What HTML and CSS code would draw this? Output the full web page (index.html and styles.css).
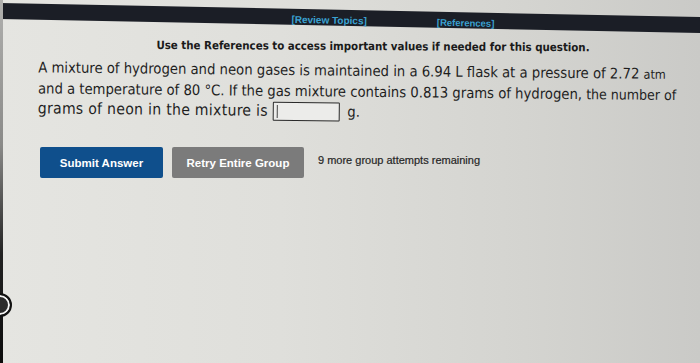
FILE: index.html
```html
<!DOCTYPE html>
<html lang="en">
<head>
<meta charset="utf-8">
<title>Question</title>
<link rel="stylesheet" href="styles.css">
</head>
<body>
<div class="screen">
  <div class="topbar">
    <a class="toplink toplink-review">[Review Topics]</a>
    <a class="toplink toplink-refs">[References]</a>
  </div>
  <p class="refnote">Use the References to access important values if needed for this question.</p>
  <p class="question">A mixture of hydrogen and neon gases is maintained in a 6.94 L flask at a pressure of 2.72 <span class="unit">atm</span> and a temperature of 80 °C. If the gas mixture contains 0.813 grams of hydrogen, <span class="tail">the number of</span> <span class="lead">grams of neon in the mixture is</span> <span class="answer"><span class="caret"></span></span> g.</p>
  <div class="actions">
    <button class="btn btn-primary">Submit Answer</button>
    <button class="btn btn-secondary">Retry Entire Group</button>
    <span class="attempts">9 more group attempts remaining</span>
  </div>
  <div class="bezel"></div>
  <div class="float-btn"></div>
</div>
</body>
</html>
```

FILE: styles.css
```css
html, body {
  margin: 0;
  padding: 0;
}
body {
  width: 700px;
  height: 363px;
  overflow: hidden;
}
.screen {
  position: relative;
  width: 700px;
  height: 363px;
  overflow: hidden;
  background: linear-gradient(90deg, #e5e5e1 0%, #dfdfdb 40%, #d4d4d0 75%, #cacac7 100%);
  display: flex;
  flex-direction: column;
  font-family: "DejaVu Sans Condensed", "DejaVu Sans", sans-serif;
  font-stretch: condensed;
  color: #1c1c1c;
}
.topbar {
  flex: none;
  width: 730px;
  margin: 10px 0 0 -15px;
  height: 16px;
  background: #1b1e26;
  transform: rotate(1.15deg);
  display: flex;
  justify-content: center;
  align-items: flex-end;
  gap: 70px;
  padding-left: 86px;
  box-sizing: border-box;
}
.toplink {
  font-family: "Liberation Sans", Arial, sans-serif;
  font-weight: bold;
  font-stretch: normal;
  color: #3aa2d2;
  font-size: 10px;
  line-height: 11px;
}
.toplink-refs {
  font-size: 9.5px;
}
.refnote {
  margin: 13px 0 0;
  padding-left: 46px;
  text-align: center;
  font-weight: bold;
  font-size: 11.4px;
  line-height: 14px;
  color: #1a1a1a;
  transform: rotate(0.3deg);
}
.question {
  margin: 4px 0 0;
  padding: 0 0 0 38px;
  width: 682px;
  box-sizing: border-box;
  font-size: 14.7px;
  line-height: 20px;
  color: #1e1e1e;
  transform: rotate(0.6deg);
  transform-origin: left center;
}
.unit {
  font-size: 12.5px;
}
.tail {
  font-size: 14px;
}
.lead {
  font-size: 15.6px;
  letter-spacing: 0.3px;
}
.answer {
  display: inline-block;
  position: relative;
  width: 65px;
  height: 17px;
  border: 1.5px solid #2a2a2a;
  border-radius: 1px;
  background: #ececea;
  vertical-align: -5px;
  margin: 0 3px 0 1px;
}
.caret {
  position: absolute;
  left: 3px;
  top: 2px;
  width: 1px;
  height: 13px;
  background: #444;
}
.actions {
  margin-top: 29px;
  padding-left: 40px;
  display: flex;
  align-items: center;
  gap: 9px;
}
.btn {
  border: none;
  border-radius: 2px;
  height: 31px;
  color: #ffffff;
  font-family: "Liberation Sans", Arial, sans-serif;
  font-weight: bold;
  font-size: 11.5px;
  padding: 0;
}
.btn-primary {
  width: 123px;
  background: #0f4f8c;
}
.btn-secondary {
  width: 132px;
  background: #7b7b7b;
}
.attempts {
  margin-left: 5px;
  margin-top: -5px;
  font-family: "Liberation Sans", Arial, sans-serif;
  font-size: 11px;
  color: #262626;
  -webkit-text-stroke: 0.2px #262626;
}
.bezel {
  position: absolute;
  left: 0;
  top: 0;
  bottom: 0;
  width: 3px;
  background: linear-gradient(180deg, #b0b0ae 0%, #8a8a88 40%, #222 70%, #0c0c0c 100%);
}
.float-btn {
  position: absolute;
  left: -12px;
  top: 293px;
  width: 20px;
  height: 20px;
  border-radius: 50%;
  border: 2px solid #111;
  box-shadow: inset 0 0 0 2px #f4f4f4;
  background: #2a2a2a;
}
```
